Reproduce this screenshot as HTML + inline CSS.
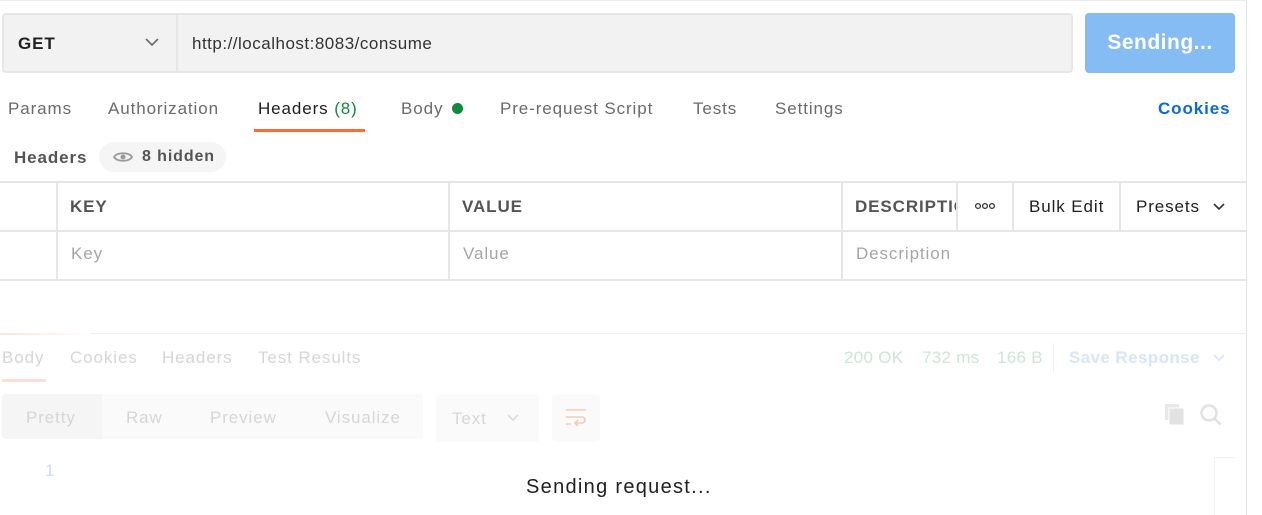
<!DOCTYPE html>
<html><head><meta charset="utf-8"><style>
*{margin:0;padding:0;box-sizing:border-box}
body{width:1262px;height:515px;background:#fff;font-family:"Liberation Sans",sans-serif;position:relative;overflow:hidden;color:#212121;letter-spacing:0.9px}
.a{position:absolute;white-space:nowrap}
.t{font-size:17px;color:#6b6b6b}
.f{color:#d6d6d6;font-size:17px}
</style></head><body>
<div class="a" style="left:0;top:0;width:1246px;height:1px;background:#ececec"></div>
<div class="a" style="left:1246px;top:0;width:1px;height:515px;background:#e6e6e6"></div>
<div class="a" style="left:2px;top:13px;width:1071px;height:60px;background:#f2f2f2;border:2px solid #e6e6e6;border-radius:4px"></div>
<div class="a" style="left:176px;top:15px;width:2px;height:56px;background:#e6e6e6"></div>
<div class="a" style="left:18px;top:34px;font-size:17px;font-weight:bold;color:#212121">GET</div>
<svg class="a" style="left:144px;top:36px" width="16" height="12"><path d="M2 3l6 6 6-6" fill="none" stroke="#6b6b6b" stroke-width="1.6"/></svg>
<div class="a" style="left:192px;top:34px;font-size:17px;color:#333;letter-spacing:0.5px">http://localhost:8083/consume</div>
<div class="a" style="left:1085px;top:13px;width:150px;height:60px;background:#85bcf4;border-radius:4px;color:#fff;font-weight:bold;font-size:21px;text-align:center;line-height:60px;letter-spacing:0.5px">Sending...</div>
<div class="a t" style="left:8px;top:99px">Params</div>
<div class="a t" style="left:108px;top:99px">Authorization</div>
<div class="a t" style="left:258px;top:99px;color:#212121">Headers <span style="color:#0d8a3b">(8)</span></div>
<div class="a" style="left:254px;top:129px;width:111px;height:3px;background:#ff6c37"></div>
<div class="a t" style="left:401px;top:99px">Body</div>
<div class="a" style="left:452px;top:103px;width:11px;height:11px;border-radius:50%;background:#0d8a3b"></div>
<div class="a t" style="left:500px;top:99px">Pre-request Script</div>
<div class="a t" style="left:693px;top:99px">Tests</div>
<div class="a t" style="left:775px;top:99px">Settings</div>
<div class="a" style="left:1158px;top:99px;font-size:17px;font-weight:bold;color:#0b6ad6">Cookies</div>
<div class="a" style="left:14px;top:148px;font-size:17px;font-weight:bold;color:#555">Headers</div>
<div class="a" style="left:99px;top:142px;width:127px;height:30px;background:#f5f5f5;border-radius:15px"></div>
<svg class="a" style="left:113px;top:150px" width="20" height="14"><path d="M1 7C4 2 16 2 19 7C16 12 4 12 1 7Z" fill="none" stroke="#9a9a9a" stroke-width="1.8"/><circle cx="10" cy="7" r="2.5" fill="#9a9a9a"/></svg>
<div class="a" style="left:142px;top:148px;font-size:16px;font-weight:bold;color:#555">8 hidden</div>
<div class="a" style="left:0;top:181px;width:1246px;height:2px;background:#e6e6e6"></div>
<div class="a" style="left:0;top:230px;width:1246px;height:2px;background:#e6e6e6"></div>
<div class="a" style="left:0;top:279px;width:1246px;height:2px;background:#e6e6e6"></div>
<div class="a" style="left:56px;top:181px;width:2px;height:100px;background:#e6e6e6"></div>
<div class="a" style="left:448px;top:181px;width:2px;height:100px;background:#e6e6e6"></div>
<div class="a" style="left:841px;top:181px;width:2px;height:100px;background:#e6e6e6"></div>
<div class="a" style="left:956px;top:181px;width:2px;height:50px;background:#e6e6e6"></div>
<div class="a" style="left:1012px;top:181px;width:2px;height:50px;background:#e6e6e6"></div>
<div class="a" style="left:1119px;top:181px;width:2px;height:50px;background:#e6e6e6"></div>
<div class="a" style="left:70px;top:197px;font-size:17px;font-weight:bold;color:#555">KEY</div>
<div class="a" style="left:462px;top:197px;font-size:17px;font-weight:bold;color:#555">VALUE</div>
<div class="a" style="left:855px;top:197px;width:101px;overflow:hidden;font-size:17px;font-weight:bold;color:#555">DESCRIPTION</div>
<svg class="a" style="left:974px;top:202px" width="22" height="8"><circle cx="4" cy="4" r="2.4" fill="none" stroke="#333" stroke-width="1.3"/><circle cx="11" cy="4" r="2.4" fill="none" stroke="#333" stroke-width="1.3"/><circle cx="18" cy="4" r="2.4" fill="none" stroke="#333" stroke-width="1.3"/></svg>
<div class="a" style="left:1029px;top:197px;font-size:17px;color:#212121">Bulk Edit</div>
<div class="a" style="left:1136px;top:197px;font-size:17px;color:#212121">Presets</div>
<svg class="a" style="left:1212px;top:201px" width="14" height="12"><path d="M2 3l5 5 5-5" fill="none" stroke="#333" stroke-width="1.6"/></svg>
<div class="a" style="left:71px;top:244px;font-size:17px;color:#a6a6a6">Key</div>
<div class="a" style="left:463px;top:244px;font-size:17px;color:#a6a6a6">Value</div>
<div class="a" style="left:856px;top:244px;font-size:17px;color:#a6a6a6">Description</div>
<div class="a" style="left:0;top:333px;width:1246px;height:1px;background:#efefef"></div>
<div class="a" style="left:0;top:333px;width:90px;height:2px;background:linear-gradient(90deg,#fde2d6,#fff)"></div>
<div class="a f" style="left:2px;top:348px">Body</div>
<div class="a f" style="left:70px;top:348px">Cookies</div>
<div class="a f" style="left:162px;top:348px">Headers</div>
<div class="a f" style="left:258px;top:348px">Test Results</div>
<div class="a" style="left:2px;top:379px;width:44px;height:3px;background:#fde0d4"></div>
<div class="a f" style="left:844px;top:348px;color:#cde6d6;letter-spacing:0.3px">200 OK</div>
<div class="a f" style="left:922px;top:348px;color:#cde6d6;letter-spacing:0.3px">732 ms</div>
<div class="a f" style="left:997px;top:348px;color:#cde6d6;letter-spacing:0.3px">166 B</div>
<div class="a" style="left:1053px;top:343px;width:1px;height:30px;background:#f0f0f0"></div>
<div class="a" style="left:1069px;top:348px;font-size:17px;font-weight:bold;color:#d6e6f8;letter-spacing:0.4px">Save Response</div>
<svg class="a" style="left:1212px;top:352px" width="14" height="12"><path d="M2 3l5 5 5-5" fill="none" stroke="#d6e6f8" stroke-width="1.6"/></svg>
<div class="a" style="left:2px;top:394px;width:421px;height:45px;background:#fafafa;border-radius:4px"></div>
<div class="a" style="left:2px;top:394px;width:100px;height:45px;background:#f5f5f5;border-radius:4px 0 0 4px"></div>
<div class="a f" style="left:26px;top:408px">Pretty</div>
<div class="a f" style="left:126px;top:408px">Raw</div>
<div class="a f" style="left:210px;top:408px">Preview</div>
<div class="a f" style="left:325px;top:408px">Visualize</div>
<div class="a" style="left:436px;top:394px;width:103px;height:48px;background:#fafafa;border-radius:4px"></div>
<div class="a f" style="left:452px;top:409px">Text</div>
<svg class="a" style="left:506px;top:412px" width="14" height="12"><path d="M2 3l5 5 5-5" fill="none" stroke="#d6d6d6" stroke-width="1.4"/></svg>
<div class="a" style="left:552px;top:394px;width:48px;height:48px;background:#fafafa;border-radius:4px"></div>
<svg class="a" style="left:564px;top:406px" width="24" height="24"><path d="M2 4h20M2 11h16a3 3 0 0 1 0 6h-6M14 14l-3 3 3 3M2 18h5" fill="none" stroke="#f7c9b5" stroke-width="1.6"/></svg>
<svg class="a" style="left:1163px;top:403px" width="24" height="24"><rect x="2" y="1" width="14" height="16" fill="#e8e8e8"/><rect x="6" y="5" width="15" height="17" fill="#e2e2e2" stroke="#fff" stroke-width="1"/></svg>
<svg class="a" style="left:1199px;top:403px" width="26" height="26"><circle cx="10" cy="10" r="7.5" fill="none" stroke="#e0e0e0" stroke-width="2.4"/><path d="M15.5 15.5l6 6" stroke="#e0e0e0" stroke-width="2.6"/></svg>
<div class="a" style="left:45px;top:461px;font-size:17px;color:#c8e0ef">1</div>
<div class="a" style="left:1214px;top:457px;width:1px;height:58px;background:#f0f0f0"></div>
<div class="a" style="left:1214px;top:457px;width:20px;height:1px;background:#f0f0f0"></div>
<div class="a" style="left:526px;top:476px;font-size:20px;color:#212121;letter-spacing:1.3px">Sending request...</div>
</body></html>
